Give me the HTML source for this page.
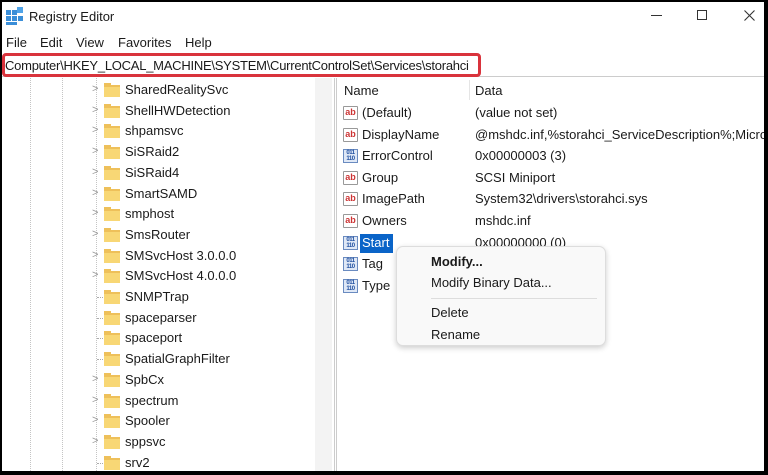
<!DOCTYPE html>
<html><head><style>
*{margin:0;padding:0;box-sizing:border-box}
body{width:768px;height:475px;overflow:hidden;background:#000;font-family:"Segoe UI","Liberation Sans",sans-serif;position:relative}
#win{position:absolute;left:2px;top:2px;width:762px;height:469px;background:#fff;overflow:hidden}
.t{position:absolute;font-size:13px;color:#1a1a1a;white-space:nowrap;line-height:16px}
.folder{position:absolute;width:16px;height:12px;background:#f8d775;border-top:2px solid #eec05a}
.folder:before{content:"";position:absolute;left:0;top:-4px;width:7px;height:3px;background:#eec05a}
.chev{position:absolute;font-size:11px;color:#999}
.vl{position:absolute;border-left:1px dotted #c4c4c4}
.hl{position:absolute;border-top:1px dotted #aaa;width:8px}
.ab{position:absolute;width:15px;height:14px;border:1px solid #999;background:#fff;font-size:9px;font-weight:bold;color:#c33;line-height:11px;text-align:center;border-radius:1px}
.bin{position:absolute;width:15px;height:14px;border:1px solid #6a8bc0;background:#dfe8f6;font-size:6px;color:#1f4fa0;line-height:6px;text-align:center;font-weight:bold;letter-spacing:-0.5px}
</style></head><body>
<div id="win">
<svg style="position:absolute;left:4px;top:5px" width="18" height="18" viewBox="0 0 18 18"><rect x="0" y="3" width="5" height="5" fill="#3a8ed8"/><rect x="6" y="3" width="5" height="5" fill="#3a8ed8"/><rect x="0" y="9" width="5" height="5" fill="#3a8ed8"/><rect x="6" y="9" width="5" height="5" fill="#3a8ed8"/><rect x="0" y="15" width="11" height="3" fill="#3a8ed8"/><rect x="11" y="0" width="6" height="6" fill="#4fa3e8"/><rect x="12" y="9" width="5" height="5" fill="#3a8ed8"/></svg>
<div class="t" style="left:27px;top:7px;font-size:13px">Registry Editor</div>
<div style="position:absolute;left:649px;top:13px;width:11px;border-top:1px solid #333"></div>
<div style="position:absolute;left:695px;top:8px;width:10px;height:10px;border:1px solid #333"></div>
<svg style="position:absolute;left:742px;top:8px" width="11" height="11"><path d="M0.5 0.5L10.5 10.5M10.5 0.5L0.5 10.5" stroke="#333" stroke-width="1.1"/></svg>
<div class="t" style="left:4px;top:33px">File</div>
<div class="t" style="left:38px;top:33px">Edit</div>
<div class="t" style="left:74px;top:33px">View</div>
<div class="t" style="left:116px;top:33px">Favorites</div>
<div class="t" style="left:183px;top:33px">Help</div>
<div style="position:absolute;left:0;top:52px;width:762px;height:23px;border-bottom:1px solid #ccc"></div>
<div style="position:absolute;left:0;top:51px;width:479px;height:24px;border:3px solid #d9333c;border-radius:4px"></div>
<div class="t" style="left:3px;top:56px;font-size:13px;letter-spacing:-0.25px">Computer\HKEY_LOCAL_MACHINE\SYSTEM\CurrentControlSet\Services\storahci</div>
<div style="position:absolute;left:313px;top:76px;width:17px;height:393px;background:#f3f3f3"></div>
<div style="position:absolute;left:332px;top:76px;width:3px;height:393px;border-left:1px solid #ccc;border-right:1px solid #ccc"></div>
<div class="vl" style="left:28px;top:76px;height:393px"></div>
<div class="vl" style="left:60px;top:76px;height:393px"></div>
<div class="vl" style="left:94px;top:76px;height:393px"></div>
<div id="tree"></div>
<div class="t" style="left:342px;top:81px">Name</div>
<div style="position:absolute;left:467px;top:78px;height:20px;border-left:1px solid #e5e5e5"></div>
<div class="t" style="left:473px;top:81px">Data</div>
<div id="list"></div>
<div style="position:absolute;left:394px;top:244px;width:210px;height:100px;background:#f9f9f9;border:1px solid #ddd;border-radius:7px;box-shadow:0 2px 6px rgba(0,0,0,0.2)">
<div class="t" style="left:34px;top:7px;font-weight:bold">Modify...</div>
<div class="t" style="left:34px;top:28px">Modify Binary Data...</div>
<div style="position:absolute;left:34px;top:51px;width:166px;border-top:1px solid #ddd"></div>
<div class="t" style="left:34px;top:58px">Delete</div>
<div class="t" style="left:34px;top:80px">Rename</div>
</div>
</div>
<script>
var names=["SharedRealitySvc","ShellHWDetection","shpamsvc","SiSRaid2","SiSRaid4","SmartSAMD","smphost","SmsRouter","SMSvcHost 3.0.0.0","SMSvcHost 4.0.0.0","SNMPTrap","spaceparser","spaceport","SpatialGraphFilter","SpbCx","spectrum","Spooler","sppsvc","srv2"];
var nochev={SNMPTrap:1,spaceparser:1,spaceport:1,SpatialGraphFilter:1,srv2:1};
var h="";
names.forEach(function(n,i){var y=80+i*20.7;
if(nochev[n])h+='<div class="hl" style="left:95px;top:'+(y+8)+'px"></div>';
else h+='<div class="chev" style="left:90px;top:'+(y+1)+'px">&gt;</div>';
h+='<div class="folder" style="left:102px;top:'+(y+3)+'px"></div><div class="t" style="left:123px;top:'+y+'px">'+n+'</div>';});
document.getElementById("tree").innerHTML=h;
var rows=[["ab","(Default)","(value not set)"],["ab","DisplayName","@mshdc.inf,%storahci_ServiceDescription%;Microsoft"],["bin","ErrorControl","0x00000003 (3)"],["ab","Group","SCSI Miniport"],["ab","ImagePath","System32\\drivers\\storahci.sys"],["ab","Owners","mshdc.inf"],["bin","Start","0x00000000 (0)"],["bin","Tag",""],["bin","Type",""]];
h="";
rows.forEach(function(r,i){var y=103+i*21.6;
h+=r[0]=="ab"?'<div class="ab" style="left:341px;top:'+(y+1)+'px">ab</div>':'<div class="bin" style="left:341px;top:'+(y+1)+'px">011<br>110</div>';
if(r[1]=="Start")h+='<div style="position:absolute;left:358px;top:'+(y-1)+'px;width:33px;height:19px;background:#0a64c8"></div><div class="t" style="left:360px;top:'+y+'px;color:#fff">Start</div>';
else h+='<div class="t" style="left:360px;top:'+y+'px">'+r[1]+'</div>';
h+='<div class="t" style="left:473px;top:'+y+'px">'+r[2]+'</div>';});
document.getElementById("list").innerHTML=h;
</script>
</body></html>
